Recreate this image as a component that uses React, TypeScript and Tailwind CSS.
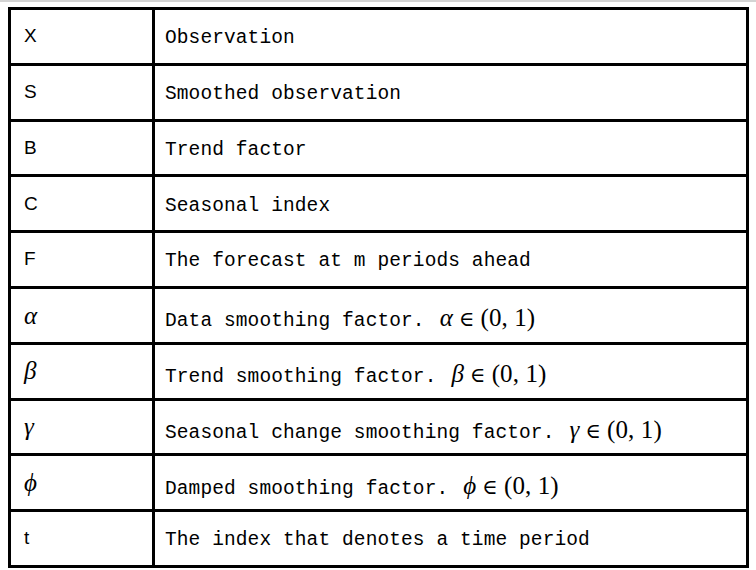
import React from "react";

type Row = { sym: string; desc: string; math?: boolean };

const Interval = ({ ch }: { ch: string }) => (
  <span className="ml-[15px] font-['Liberation_Serif',serif] text-[25px]">
    <span className="italic">{ch}</span>
    <span className="mx-[6px] font-['DejaVu_Serif',serif] text-[21px] font-light">∈</span>
    (0, 1)
  </span>
);

const rows: Row[] = [
  { sym: "X", desc: "Observation" },
  { sym: "S", desc: "Smoothed observation" },
  { sym: "B", desc: "Trend factor" },
  { sym: "C", desc: "Seasonal index" },
  { sym: "F", desc: "The forecast at m periods ahead" },
  { sym: "α", desc: "Data smoothing factor.", math: true },
  { sym: "β", desc: "Trend smoothing factor.", math: true },
  { sym: "γ", desc: "Seasonal change smoothing factor.", math: true },
  { sym: "ϕ", desc: "Damped smoothing factor.", math: true },
  { sym: "t", desc: "The index that denotes a time period" },
];

export default function App() {
  return (
    <div className="w-[756px] h-[570px] bg-white overflow-hidden">
      <div className="h-[2px] bg-[#d4d4d4]" />
      <div className="pl-[8px] pt-[5px]">
        <table className="border-collapse w-[741px] h-[558px] text-black">
          <tbody>
            {rows.map((r, i) => (
              <tr key={i} className="h-[55.8px]">
                <td
                  className={
                    r.math
                      ? "w-[144px] border-[3px] border-black pl-[13px] font-['Liberation_Serif',serif] text-[25px] italic"
                      : "w-[144px] border-[3px] border-black pl-[13px] font-['Liberation_Sans',sans-serif] text-[19px]"
                  }
                >
                  {r.sym}
                </td>
                <td className="border-[3px] border-black pl-[10px] pt-[5px] font-['Liberation_Mono',monospace] text-[19.5px] tracking-[0.1px] whitespace-nowrap">
                  {r.desc}
                  {r.math && <Interval ch={r.sym} />}
                </td>
              </tr>
            ))}
          </tbody>
        </table>
      </div>
    </div>
  );
}
